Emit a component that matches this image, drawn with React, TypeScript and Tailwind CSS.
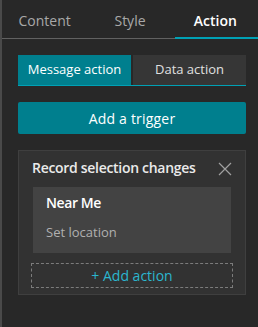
import React, { useState } from 'react';

export default function App() {
  const [tab, setTab] = useState('Action');
  const [mode, setMode] = useState('message');

  return (
    <div
      className="w-[258px] h-[327px] bg-[#282828] border-l-2 border-[#4a4a4a] text-[#e0e0e0] overflow-hidden"
      style={{ fontFamily: '"Open Sans", "Noto Sans", sans-serif' }}
    >
      {/* Tabs */}
      <div className="flex h-[39px] border-b border-[#616161]">
        {['Content', 'Style', 'Action'].map((t) => (
          <button
            key={t}
            onClick={() => setTab(t)}
            className={`flex-1 relative text-[14px] pt-[3px] ${tab === t ? 'text-white font-semibold' : 'text-[#a8a8a8]'}`}
          >
            {t}
            {tab === t && <span className="absolute left-[2px] right-0 bottom-[-1px] h-[2px] bg-[#00a1b5]" />}
          </button>
        ))}
      </div>

      <div className="pl-4 pr-3 pt-4">
        {/* Segmented control */}
        <div className="flex gap-[2px] border-b border-[#00a1b5]">
          <button
            onClick={() => setMode('message')}
            className={`flex-1 h-[30px] text-[13px] ${mode === 'message' ? 'bg-[#007f8e] text-white' : 'bg-[#363636] text-[#e0e0e0]'}`}
          >
            Message action
          </button>
          <button
            onClick={() => setMode('data')}
            className={`flex-1 h-[30px] text-[13px] ${mode === 'data' ? 'bg-[#007f8e] text-white' : 'bg-[#363636] text-[#e0e0e0]'}`}
          >
            Data action
          </button>
        </div>

        <button className="mt-4 w-full h-[32px] rounded-[2px] bg-[#007f8e] text-[14px] tracking-[0.2px] text-white">
          Add a trigger
        </button>

        {/* Trigger card */}
        <div className="mt-4 bg-[#323232] border border-[#3f3f3f] px-[14px] pb-[6px]">
          <div className="flex items-center justify-between h-[36px] pb-[4px]">
            <span className="text-[14px] font-semibold tracking-[-0.3px] text-[#eaeaea] -ml-[1px]">Record selection changes</span>
            <svg width="14" height="14" viewBox="0 0 14 14" className="mr-[-1px] mt-[4px]">
              <path d="M1 1L13 13M13 1L1 13" stroke="#a0a0a0" strokeWidth="1.2" />
            </svg>
          </div>
          <div className="bg-[#434343] h-[66px] px-[13px] pt-[5px]">
            <div className="text-[14px] font-semibold tracking-[-0.4px] text-white">Near Me</div>
            <div className="mt-[10px] text-[13px] text-[#b0b0b0]">Set location</div>
          </div>
          <button className="mt-[10px] -mx-[2px] w-[calc(100%+4px)] h-[25px] border border-dashed border-[#7c7c7c] text-[14px] text-[#2bb6cf]">
            + Add action
          </button>
        </div>
      </div>
    </div>
  );
}
